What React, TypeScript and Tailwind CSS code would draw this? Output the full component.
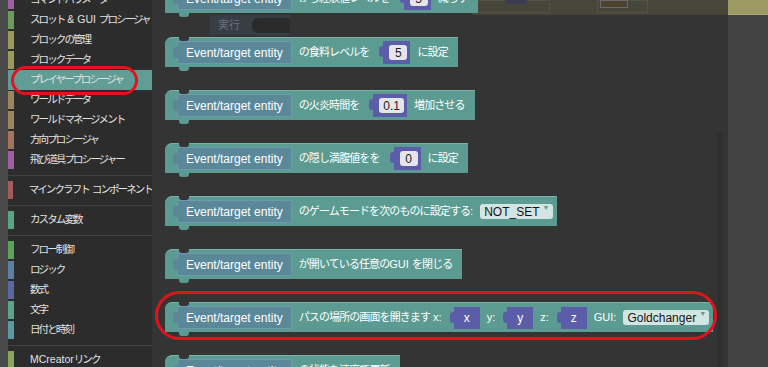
import type { ReactNode } from 'react'

type Cat = { label: string; strip: string; active?: boolean } | { sep: true }

const cats: Cat[] = [
  { label: 'コマンドパラメーター', strip: 'bg-[#9f5ea6]' },
  { label: 'スロット & GUI プロシージャ', strip: 'bg-[#6a9b5b]' },
  { label: 'ブロックの管理', strip: 'bg-[#9b9a5b]' },
  { label: 'ブロックデータ', strip: 'bg-[#9b9a5b]' },
  { label: 'プレイヤープロシージャ', strip: 'bg-[#5f9d95]', active: true },
  { label: 'ワールドデータ', strip: 'bg-[#9b875b]' },
  { label: 'ワールドマネージメント', strip: 'bg-[#9b875b]' },
  { label: '方向プロシージャ', strip: 'bg-[#a5745c]' },
  { label: '飛び道具プロシージャー', strip: 'bg-[#9f5ea6]' },
  { sep: true },
  { label: 'マインクラフト コンポーネント', strip: 'bg-[#a55b5b]' },
  { sep: true },
  { label: 'カスタム変数', strip: 'bg-[#5ba583]' },
  { sep: true },
  { label: 'フロー制御', strip: 'bg-[#5ba55b]' },
  { label: 'ロジック', strip: 'bg-[#5b80a5]' },
  { label: '数式', strip: 'bg-[#5b67a5]' },
  { label: '文字', strip: 'bg-[#5ba58c]' },
  { label: '日付と時刻', strip: 'bg-[#5b9aa5]' },
  { sep: true },
  { label: 'MCreatorリンク', strip: 'bg-[#8ca55b]' },
]

// Japanese runs get tighter tracking, latin runs keep normal spacing
function Mixed({ s, cjk }: { s: string; cjk: string }) {
  return (
    <>
      {s.split(/([\x20-\x7e]+)/).map((p, i) =>
        p === '' ? null : /[\x20-\x7e]/.test(p) ? (
          <span key={i} className="tracking-normal">
            {p}
          </span>
        ) : (
          <span key={i} className={cjk}>
            {p}
          </span>
        ),
      )}
    </>
  )
}

function Sidebar() {
  return (
    <div className="relative flex h-full shrink-0">
      <div className="h-full w-[8px] bg-[#4a4a4a]" />
      <div className="flex h-full w-[144px] flex-col overflow-hidden bg-[#2c2c2c]">
        <div className="-mt-[10px]" />
        {cats.map((c, i) =>
          'sep' in c ? (
            <div key={i} className="flex h-[10px] shrink-0 items-center">
              <div className="h-px w-full bg-[#414141]" />
            </div>
          ) : (
            <div
              key={i}
              className={`flex h-[20px] shrink-0 items-center ${c.active ? 'bg-[#5f9d95]' : ''}`}
            >
              <span className={`my-px h-[18px] w-[6px] ${c.strip}`} />
              <span className="ml-[16px] whitespace-nowrap text-[10.5px] text-[#e2e2e2]">
                <Mixed s={c.label} cjk="tracking-[-1.9px]" />
              </span>
            </div>
          ),
        )}
      </div>
      <div className="absolute left-[11px] top-[66px] h-[29px] w-[127px] rounded-[15px] border-[3px] border-[#e3131b]" />
    </div>
  )
}

function Block({ children, className = '', tight = false }: { children: ReactNode; className?: string; tight?: boolean }) {
  return (
    <div
      className={`relative flex h-[30px] w-fit shrink-0 items-center gap-[7px] whitespace-nowrap rounded-tl-[7px] border-t border-[#7bb1a9] bg-[#5b9b91] pl-[12px] text-[11px] text-white ${tight ? 'pr-[4px]' : 'pr-[10px]'} ${className}`}
    >
      <span className="absolute -top-px left-[14px] h-[4px] w-[10px] rounded-b-[3px] bg-[#343434]" />
      <span className="absolute -bottom-[4px] left-[14px] h-[4px] w-[10px] rounded-b-[3px] bg-[#5b9b91]" />
      {children}
    </div>
  )
}

function Txt({ s }: { s: string }) {
  return (
    <span>
      <Mixed s={s} cjk="tracking-[-0.9px]" />
    </span>
  )
}

function Entity() {
  return (
    <div className="relative flex h-[23px] items-center border border-[#6e9aab] bg-[#5a8899] px-[8px] text-[12px]">
      <span className="absolute -left-[5px] top-[5px] h-[11px] w-[5px] rounded-l-[3px] bg-[#5a8899]" />
      Event/target entity
    </div>
  )
}

function Num({ v }: { v: string }) {
  return (
    <div className="relative ml-[7px] flex h-[23px] items-center bg-[#5c5da8] pl-[6px] pr-[3px]">
      <span className="absolute -left-[4px] top-[5px] h-[11px] w-[5px] rounded-l-[3px] bg-[#5c5da8]" />
      <span className="flex h-[15px] min-w-[18px] items-center justify-center rounded-[3px] bg-[#e6e6ea] px-[4px] text-[12px] text-[#1c1c1c]">
        {v}
      </span>
    </div>
  )
}

function Var({ v }: { v: string }) {
  return (
    <div className="relative ml-[5px] flex h-[22px] w-[26px] items-center justify-center bg-[#5c5da8] text-[12px]">
      <span className="absolute -left-[4px] top-[5px] h-[11px] w-[5px] rounded-l-[3px] bg-[#5c5da8]" />
      {v}
    </div>
  )
}

function Drop({ v }: { v: string }) {
  return (
    <span className="relative flex h-[15px] items-center rounded-[3px] bg-[#d3e5e2] pl-[4px] pr-[13px] text-[12px] text-[#151515]">
      {v}
      <span className="absolute right-[3px] top-[-1px] text-[7px] text-[#5b9b91]">▼</span>
    </span>
  )
}

function Workspace() {
  return (
    <div className="relative h-full flex-1 overflow-hidden bg-[#343434]">
      <div className="absolute left-[320px] top-0 h-[15px] w-[256px] bg-[#46473a]">
        <div className="absolute left-[1px] top-0 h-[13px] w-[77px] border border-[#525344]" />
        <div className="absolute left-[33px] top-0 h-[4px] w-[22px] bg-[#3b3c52]" />
        <div className="absolute left-[125px] top-0 h-[13px] w-[51px] border border-[#525344]" />
        <div className="absolute left-[128px] top-0 h-[8px] w-[28px] border border-[#6a6a6a] bg-[#4e4330]" />
      </div>
      <div className="absolute left-[565px] top-[132px] h-[240px] w-[5px] bg-[#2f2f2f]" />

      <div className="flex flex-col pl-[13px]">
        <Block className="-mt-[17px]">
          <Entity />
          <Txt s="から経験値レベルを" />
          <Num v="5" />
          <Txt s="減らす" />
        </Block>
        <div className="h-[24px] shrink-0">
          <div className="ml-[45px] mt-[2px] flex h-[20px] w-[80px] items-center bg-[#393e45]">
            <span className="ml-[8px] text-[11px] text-[#6a7078]">実行</span>
            <span className="ml-auto h-[15px] w-[38px] rounded-l-[6px] bg-[#2b2b2b]" />
          </div>
        </div>
        <div className="flex flex-col gap-[23px]">
          <Block>
            <Entity />
            <Txt s="の食料レベルを" />
            <Num v="5" />
            <Txt s="に設定" />
          </Block>
          <Block>
            <Entity />
            <Txt s="の火炎時間を" />
            <Num v="0.1" />
            <Txt s="増加させる" />
          </Block>
          <Block>
            <Entity />
            <Txt s="の隠し満腹値をを" />
            <Num v="0" />
            <Txt s="に設定" />
          </Block>
          <Block tight>
            <Entity />
            <Txt s="のゲームモードを次のものに設定する:" />
            <Drop v="NOT_SET" />
          </Block>
          <Block>
            <Entity />
            <Txt s="が開いている任意のGUI を閉じる" />
          </Block>
          <Block tight>
            <Entity />
            <Txt s="パスの場所の画面を開きます x:" />
            <Var v="x" />
            <Txt s="y:" />
            <Var v="y" />
            <Txt s="z:" />
            <Var v="z" />
            <Txt s="GUI:" />
            <Drop v="Goldchanger" />
          </Block>
          <Block>
            <Entity />
            <Txt s="の状態を速度で更新" />
          </Block>
        </div>
      </div>
      <div className="absolute left-[3px] top-[291px] h-[49px] w-[562px] rounded-[30px] border-[3px] border-[#e3131b]" />
    </div>
  )
}

export default function App() {
  return (
    <div className="relative flex h-[367px] w-[768px] overflow-hidden bg-[#343434] font-['Liberation_Sans','Noto_Sans_CJK_JP',sans-serif]">
      <Sidebar />
      <Workspace />
      <div className="flex h-full w-[40px] shrink-0 flex-col bg-[#434343]">
        <div className="h-[15px] border-b border-[#a8a66e] bg-[#9d9b63]" />
      </div>
    </div>
  )
}
